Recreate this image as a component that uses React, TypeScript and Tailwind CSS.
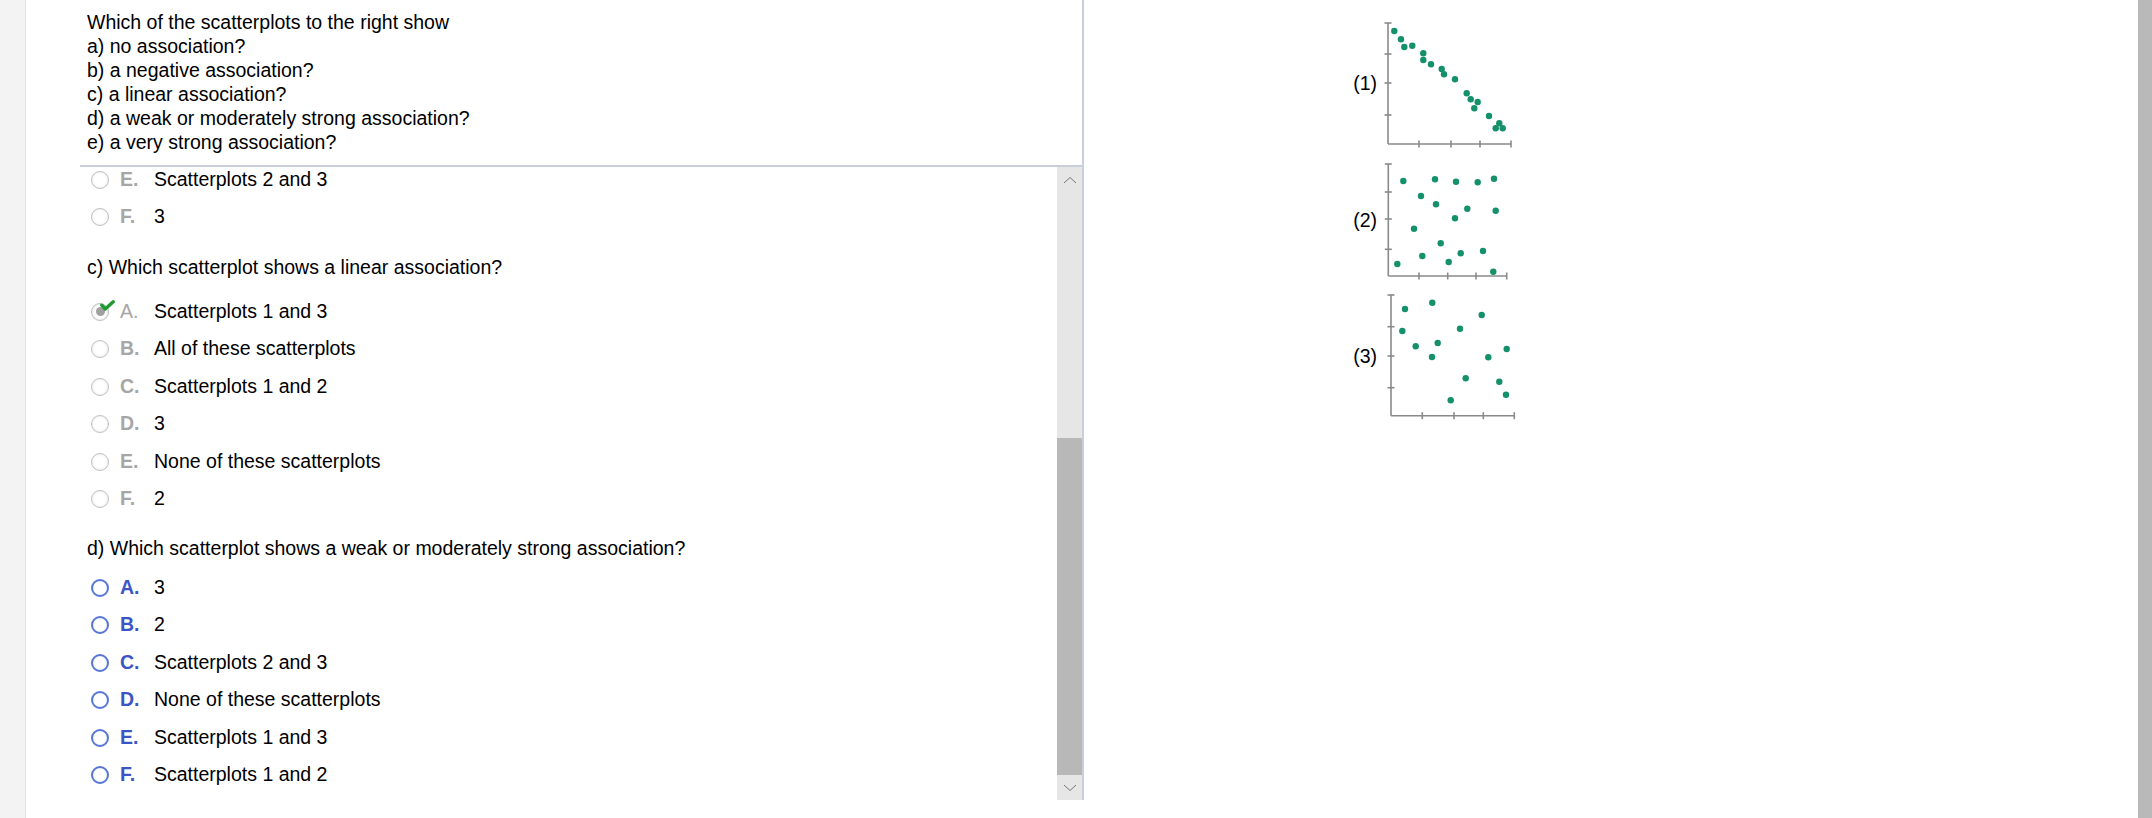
import React from 'react';

type RadioKind = 'off' | 'blue' | 'checked';

interface Option {
  letter: string;
  text: string;
}

const plot1 = [
  [12.3, 16], [19, 24.3], [22.3, 32], [30.3, 30.7], [41.3, 38.3], [41.3, 45], [49, 49.3],
  [59.7, 54], [62, 59.3], [73, 64.3], [84.7, 78.3], [88.7, 84.3], [95.7, 87], [92.3, 93.3],
  [107, 101], [113.7, 113.3], [117.3, 108.3], [120.7, 113.3],
];

const plot2 = [
  [21.3, 26], [53, 24.3], [74, 26.7], [95.7, 27.3], [112, 23.7], [39, 41], [54, 49.3],
  [85.3, 53.7], [113.7, 55.7], [73, 63.3], [32, 73.7], [58.7, 88.3], [40.3, 101],
  [78.7, 98.3], [101, 96], [15.3, 109], [66.7, 107], [111.3, 116.7],
];

const plot3 = [
  [23, 22], [50.3, 15.7], [99.7, 28], [20.3, 44], [78, 41.7], [33.7, 59.3], [55.7, 56],
  [50, 70], [106.3, 70.3], [124.7, 62], [83.7, 91.3], [117.3, 94.7], [124, 107.7], [68.7, 113.3],
];

function Radio({ kind }: { kind: RadioKind }) {
  if (kind === 'blue') {
    return (
      <span className="w-[18px] h-[18px] shrink-0 rounded-full border-2 border-[#5877d4] bg-[radial-gradient(circle,#ffffff_50%,#e4eafa_100%)]" />
    );
  }
  if (kind === 'checked') {
    return (
      <span className="relative w-[18px] h-[18px] shrink-0 rounded-full border border-[#bdbdbd] bg-[radial-gradient(circle,#ffffff_40%,#e6e6e6_100%)] flex items-center justify-center">
        <span className="w-[9px] h-[9px] rounded-full bg-[#a0a0a0]" />
        <svg className="absolute -top-[4px] left-[8px]" width="15" height="11" viewBox="0 0 15 11">
          <path d="M1.8 5.2 L5.3 9 L13.2 1.8" fill="none" stroke="#1f9a33" strokeWidth="3.4" strokeLinecap="round" strokeLinejoin="round" />
        </svg>
      </span>
    );
  }
  return (
    <span className="w-[18px] h-[18px] shrink-0 rounded-full border border-[#c0c0c0] bg-[radial-gradient(circle,#ffffff_45%,#e9e9e9_100%)]" />
  );
}

function OptionRow({ opt, kind, bold = true }: { opt: Option; kind: RadioKind; bold?: boolean }) {
  const letterClass =
    kind === 'blue'
      ? 'ml-[11px] w-[34px] font-bold text-[#3c55c6]'
      : bold
        ? 'ml-[11px] w-[34px] font-bold text-[#a6a6a6]'
        : 'ml-[11px] w-[34px] text-[#a6a6a6]';
  return (
    <div className="flex items-center h-[37.5px] pl-[65px] shrink-0">
      <Radio kind={kind} />
      <span className={letterClass}>{opt.letter}</span>
      <span className="text-black">{opt.text}</span>
    </div>
  );
}

function Axis({ x, y0, y1, x1, yTicks, xTicks }: { x: number; y0: number; y1: number; x1: number; yTicks: number[]; xTicks: number[] }) {
  return (
    <g stroke="#8a8a8a" strokeWidth="1.6">
      <line x1={x} y1={y0} x2={x} y2={y1} />
      <line x1={x} y1={y1} x2={x1} y2={y1} />
      {yTicks.map((t) => (
        <line key={'y' + t} x1={x - 3.5} y1={t} x2={x + 3.5} y2={t} />
      ))}
      {xTicks.map((t) => (
        <line key={'x' + t} x1={t} y1={y1 - 3.5} x2={t} y2={y1 + 3.5} />
      ))}
    </g>
  );
}

function Dots({ pts }: { pts: number[][] }) {
  return (
    <g fill="#14906a">
      {pts.map(([cx, cy], i) => (
        <circle key={i} cx={cx} cy={cy} r="3.2" />
      ))}
    </g>
  );
}

function PlotRow({ label, labelTop, height, children }: { label: string; labelTop: string; height: number; children: React.ReactNode }) {
  return (
    <div className="flex items-start">
      <div className={`w-[28px] text-right leading-[24px] ${labelTop}`}>{label}</div>
      <svg className="ml-[5px]" width="140" height={height} viewBox={`0 0 140 ${height}`}>
        {children}
      </svg>
    </div>
  );
}

function ScrollBar() {
  return (
    <div className="w-[25px] h-full flex flex-col bg-[#e6e6e6] shrink-0">
      <div className="h-[25px] flex items-center justify-center">
        <svg width="14" height="8" viewBox="0 0 14 8">
          <polyline points="1,7 7,1.5 13,7" fill="none" stroke="#777" strokeWidth="1" />
        </svg>
      </div>
      <div className="h-[246px]" />
      <div className="flex-1 bg-[#b8b8b8]" />
      <div className="h-[25px] flex items-center justify-center">
        <svg width="14" height="8" viewBox="0 0 14 8">
          <polyline points="1,1 7,6.5 13,1" fill="none" stroke="#777" strokeWidth="1" />
        </svg>
      </div>
    </div>
  );
}

export default function App() {
  const bOpts: Option[] = [
    { letter: 'E.', text: 'Scatterplots 2 and 3' },
    { letter: 'F.', text: '3' },
  ];
  const cOpts: Option[] = [
    { letter: 'A.', text: 'Scatterplots 1 and 3' },
    { letter: 'B.', text: 'All of these scatterplots' },
    { letter: 'C.', text: 'Scatterplots 1 and 2' },
    { letter: 'D.', text: '3' },
    { letter: 'E.', text: 'None of these scatterplots' },
    { letter: 'F.', text: '2' },
  ];
  const dOpts: Option[] = [
    { letter: 'A.', text: '3' },
    { letter: 'B.', text: '2' },
    { letter: 'C.', text: 'Scatterplots 2 and 3' },
    { letter: 'D.', text: 'None of these scatterplots' },
    { letter: 'E.', text: 'Scatterplots 1 and 3' },
    { letter: 'F.', text: 'Scatterplots 1 and 2' },
  ];

  return (
    <div className="flex w-full h-[818px] bg-white text-black text-[19.5px] font-['Liberation_Sans',Arial,sans-serif] overflow-hidden">
      <div className="w-[26px] h-full bg-[#f3f3f3] border-r border-[#e2e2e2] shrink-0" />

      <div className="w-[1058px] h-[800px] flex flex-col border-r-2 border-[#c9cedb] shrink-0">
        <div className="pl-[61px] pt-[10px] pb-[11px] leading-[24px]">
          <div>Which of the scatterplots to the right show</div>
          <div>a) no association?</div>
          <div>b) a negative association?</div>
          <div>c) a linear association?</div>
          <div>d) a weak or moderately strong association?</div>
          <div>e) a very strong association?</div>
        </div>
        <div className="ml-[54px] h-[2px] bg-[#c9cedb]" />

        <div className="flex flex-1 min-h-0">
          <div className="flex-1 overflow-hidden flex flex-col">
            <div className="-mt-[6.25px] flex flex-col">
              {bOpts.map((o) => (
                <OptionRow key={'b' + o.letter} opt={o} kind="off" />
              ))}
            </div>
            <div className="mt-[18.75px] pl-[61px] leading-[24px]">c) Which scatterplot shows a linear association?</div>
            <div className="mt-[14.25px] flex flex-col">
              {cOpts.map((o, i) => (
                <OptionRow key={'c' + o.letter} opt={o} kind={i === 0 ? 'checked' : 'off'} bold={i !== 0} />
              ))}
            </div>
            <div className="mt-[17.75px] pl-[61px] leading-[24px]">d) Which scatterplot shows a weak or moderately strong association?</div>
            <div className="mt-[9.25px] flex flex-col">
              {dOpts.map((o) => (
                <OptionRow key={'d' + o.letter} opt={o} kind="blue" />
              ))}
            </div>
          </div>
          <ScrollBar />
        </div>
      </div>

      <div className="flex-1 pl-[265px] pt-[15px] flex flex-col gap-[5px]">
        <PlotRow label="(1)" labelTop="mt-[56px]" height={135}>
          <Axis x={6} y0={8} y1={129} x1={129} yTicks={[8, 39, 68, 100]} xTicks={[37, 69, 98, 129]} />
          <Dots pts={plot1} />
        </PlotRow>
        <PlotRow label="(2)" labelTop="mt-[53px]" height={127}>
          <Axis x={6.3} y0={9} y1={121} x1={124.7} yTicks={[9, 37, 64, 94.3]} xTicks={[37, 65.7, 94, 124.7]} />
          <Dots pts={plot2} />
        </PlotRow>
        <PlotRow label="(3)" labelTop="mt-[57px]" height={140}>
          <Axis x={9} y0={8} y1={128.7} x1={132.3} yTicks={[8, 39.7, 69, 100.7]} xTicks={[40.3, 72, 101.3, 132.3]} />
          <Dots pts={plot3} />
        </PlotRow>
      </div>

      <div className="w-[14px] h-full bg-[#b9b9b9] shrink-0" />
    </div>
  );
}
